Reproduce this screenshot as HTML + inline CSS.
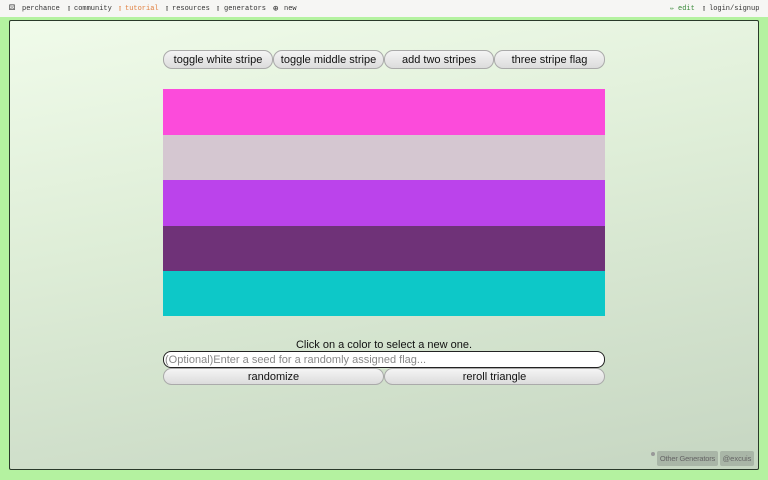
<!DOCTYPE html><html><head><style>
body{margin:0;width:768px;height:480px;overflow:hidden;background:#b4f2a0;font-family:"Liberation Sans",sans-serif;position:relative}
#top{position:absolute;left:0;top:0;width:768px;height:17px;background:#f6f6f4;font-family:"Liberation Mono",monospace;font-size:7px;color:#333;line-height:18px;white-space:nowrap}
#top span{position:absolute;top:0;white-space:nowrap}
#panel{position:absolute;left:9px;top:20px;width:748px;height:448px;border:1px solid #2a3a2a;border-radius:2px;background:linear-gradient(170deg,#f0fbea 0%,#dfeed8 40%,#c6d6c2 100%)}
.b{position:absolute;border:1px solid #aaa;border-radius:9px;background:linear-gradient(#f4f4f4,#dcdcdc);font-size:11px;color:#111;text-align:center;line-height:19px;box-sizing:border-box;height:19px;white-space:nowrap}
.s{position:absolute;left:163px;width:442px}
</style></head><body>
<div id="top">
<span style="left:9px;font-size:10px">⚄</span><span style="left:22px">perchance</span>
<span style="left:67px">▯</span><span style="left:74px">community</span>
<span style="left:118px;color:#e08040">▯</span><span style="left:125px;color:#e08040">tutorial</span>
<span style="left:165px">▯</span><span style="left:172px">resources</span>
<span style="left:216px">▯</span><span style="left:224px">generators</span>
<span style="left:273px;font-size:9px">⊕</span><span style="left:284px">new</span>
<span style="left:670px;color:#3a8a3a">✏</span><span style="left:678px;color:#3a8a3a">edit</span>
<span style="left:702px">▯</span><span style="left:709px">login/signup</span>
</div>
<div id="panel"></div>
<div class="b" style="left:163px;top:50px;width:110px">toggle white stripe</div>
<div class="b" style="left:273px;top:50px;width:111px">toggle middle stripe</div>
<div class="b" style="left:384px;top:50px;width:110px">add two stripes</div>
<div class="b" style="left:494px;top:50px;width:111px">three stripe flag</div>
<div class="s" style="top:89px;height:46px;background:#fc4bdb"></div>
<div class="s" style="top:135px;height:45px;background:#d5c7d1"></div>
<div class="s" style="top:180px;height:46px;background:#bb43eb"></div>
<div class="s" style="top:226px;height:45px;background:#6f3278"></div>
<div class="s" style="top:271px;height:45px;background:#0dc8c8"></div>
<div style="position:absolute;left:163px;width:442px;top:339px;text-align:center;font-size:11px;color:#111">Click on a color to select a new one.</div>
<div style="position:absolute;left:163px;top:351px;width:442px;height:17px;box-sizing:border-box;border:1.5px solid #222;border-radius:8px;background:#fff;font-size:11px;color:#888;line-height:16px;padding-left:1px;white-space:nowrap">(Optional)Enter a seed for a randomly assigned flag...</div>
<div class="b" style="left:163px;top:368px;width:221px;height:17px;line-height:17px">randomize</div>
<div class="b" style="left:384px;top:368px;width:221px;height:17px;line-height:17px">reroll triangle</div>
<div style="position:absolute;left:651px;top:452px;width:4px;height:4px;border-radius:2px;background:#999"></div>
<div style="position:absolute;left:657px;top:451px;width:61px;height:15px;background:#a9b6a7;font-size:7.5px;color:#666;line-height:15px;text-align:center;border-radius:2px;white-space:nowrap;letter-spacing:-0.2px">Other Generators</div>
<div style="position:absolute;left:720px;top:451px;width:34px;height:15px;background:#a9b6a7;font-size:7.5px;color:#666;line-height:15px;text-align:center;border-radius:2px">@excuis</div>
</body></html>
